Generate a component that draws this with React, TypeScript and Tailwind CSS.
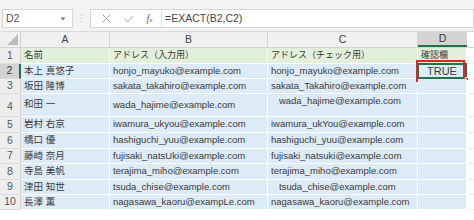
import React from "react";

type Row = {
	n: number;
	h: string;
	a: string;
	b: string;
	c: string;
	d?: string;
};

const rows: Row[] = [
	{ n: 1, h: "h-[16px]", a: "名前", b: "アドレス（入力用）", c: "アドレス（チェック用）", d: "確認欄" },
	{ n: 2, h: "h-[15px]", a: "本上 真悠子", b: "honjo_mayuko@example.com", c: "honjo_mayuko@example.com", d: "TRUE" },
	{ n: 3, h: "h-[15px]", a: "坂田 隆博", b: "sakata_takahiro@example.com", c: "sakata_Takahiro@example.com" },
	{ n: 4, h: "h-[23px]", a: "和田 一", b: "wada_hajime@example.com", c: "   wada_hajime@example.com" },
	{ n: 5, h: "h-[16px]", a: "岩村 右京", b: "iwamura_ukyou@example.com", c: "iwamura_ukYou@example.com" },
	{ n: 6, h: "h-[16px]", a: "橋口 優", b: "hashiguchi_yuu@example.com", c: "hashiguchi_yuu@example.com" },
	{ n: 7, h: "h-[15px]", a: "藤崎 奈月", b: "fujisaki_natsUki@example.com", c: "fujisaki_natsuki@example.com" },
	{ n: 8, h: "h-[16px]", a: "寺島 美帆", b: "terajima_miho@example.com", c: "terajima_miho@example.com" },
	{ n: 9, h: "h-[15px]", a: "津田 知世", b: "tsuda_chise@example.com", c: "   tsuda_chise@example.com" },
	{ n: 10, h: "h-[15px]", a: "長澤 薫", b: "nagasawa_kaoru@exampLe.com", c: "nagasawa_kaoru@example.com" },
];

function FormulaBar() {
	return (
		<div className="h-[32px] bg-[#f3f3f3] flex items-start pt-[9px] pl-[2px] border-b border-[#dadada]">
			<div className="w-[71px] h-[19px] bg-white border border-[#d6d6d6] flex items-center justify-between pl-[3px] pr-[6px]">
				<span className="text-[10.5px] text-[#555]">D2</span>
				<svg width="6" height="4" viewBox="0 0 6 4">
					<path d="M0.5 0.5 L3 3.5 L5.5 0.5 Z" fill="#777" />
				</svg>
			</div>
			<div className="w-[17px] h-[19px] flex flex-col items-center justify-center gap-[2px]">
				<span className="w-[1px] h-[1px] bg-[#bbb]" />
				<span className="w-[1px] h-[1px] bg-[#bbb]" />
				<span className="w-[1px] h-[1px] bg-[#bbb]" />
			</div>
			<div className="flex-1 h-[19px] bg-white border border-[#d6d6d6] flex items-center">
				<div className="w-[71px] h-full flex items-center justify-around pl-[4px] pr-[2px] border-r border-[#e2e2e2]">
					<svg width="9" height="9" viewBox="0 0 9 9">
						<path d="M1 1 L8 8 M8 1 L1 8" stroke="#a8a8a8" strokeWidth="1" />
					</svg>
					<svg width="10" height="8" viewBox="0 0 10 8">
						<path d="M1 4 L3.8 7 L9 1" stroke="#a8a8a8" strokeWidth="1" fill="none" />
					</svg>
					<span className="text-[10px] italic text-[#666] font-['Liberation_Serif',serif]">
						f<span className="text-[7px]">x</span>
					</span>
				</div>
				<span className="pl-[3px] text-[10.5px] text-[#444]">=EXACT(B2,C2)</span>
			</div>
		</div>
	);
}

function ColumnHeaders() {
	return (
		<div className="flex h-[16px] bg-[#f0f0f0] border-b border-[#d4d4d4] text-[10.5px] text-[#444]">
			<div className="w-[21px] relative border-r border-[#d4d4d4]">
				<svg className="absolute right-[2px] bottom-[2px]" width="11" height="11" viewBox="0 0 11 11">
					<path d="M11 0 L11 11 L0 11 Z" fill="#bdbdbd" />
				</svg>
			</div>
			<div className="w-[89px] flex items-center justify-center border-r border-[#d4d4d4]">A</div>
			<div className="w-[158px] flex items-center justify-center border-r border-[#d4d4d4]">B</div>
			<div className="w-[150px] flex items-center justify-center border-r border-[#d4d4d4]">C</div>
			<div className="w-[49px] flex items-center justify-center bg-[#d3d3d3] border-b-2 border-[#217346] text-[#3a3a3a]">
				D
			</div>
			<div className="flex-1 bg-white" />
		</div>
	);
}

function SheetRow({ row }: { row: Row }) {
	const first = row.n === 1;
	const fill = first ? "bg-[#e2efda]" : "bg-[#ddebf7]";
	const tall = row.n === 4;
	const selected = row.n === 2;
	return (
		<div className={`flex ${row.h} text-[9.5px] text-[#3a3a3a]`}>
			<div
				className={`w-[21px] flex justify-center text-[10.5px] border-b border-[#dcdcdc] ${
					tall ? "items-end pb-[1px]" : "items-center"
				} ${selected ? "bg-[#d3d3d3] border-r-2 border-r-[#217346] text-[#3a3a3a]" : "bg-[#eeeeee] border-r border-r-[#d4d4d4] text-[#555]"}`}
			>
				{row.n}
			</div>
			<div
				className={`w-[89px] ${fill} border-r border-b border-white flex pl-[3px] overflow-hidden whitespace-nowrap ${
					tall ? "items-start pt-[3px]" : "items-center"
				}`}
			>
				<span className="text-[9.5px]">{row.a}</span>
			</div>
			<div
				className={`w-[158px] ${fill} border-r border-b border-white flex items-center pl-[3px] overflow-hidden whitespace-pre`}
			>
				<span className={first ? "text-[9px]" : ""}>{row.b}</span>
			</div>
			<div
				className={`w-[150px] ${fill} border-r border-b border-white flex pl-[3px] overflow-hidden whitespace-pre ${
					tall ? "items-start" : "items-center"
				}`}
			>
				<span className={first ? "text-[9px]" : ""}>{row.c}</span>
			</div>
			<div
				className={`w-[49px] ${fill} border-r border-b border-white flex items-center relative ${
					selected ? "justify-center" : "pl-[3px]"
				}`}
			>
				{row.d && <span className={first ? "text-[9px]" : "text-[11px]"}>{row.d}</span>}
				{selected && (
					<>
						<div className="absolute inset-[-1px] border-2 border-[#217346]" />
						<div className="absolute right-[-3px] bottom-[-3px] w-[4px] h-[4px] bg-[#217346] border border-white" />
						<div className="absolute left-[-2px] right-[1px] top-[-4px] bottom-[-4px] border-2 border-[#e8202a]" />
					</>
				)}
			</div>
			<div className="flex-1 bg-white border-b border-[#f0f0f0]" />
		</div>
	);
}

export default function App() {
	return (
		<div className="w-[474px] h-[220px] overflow-hidden bg-white font-['Liberation_Sans','Noto_Sans_CJK_JP',sans-serif]">
			<FormulaBar />
			<ColumnHeaders />
			{rows.map((row) => (
				<SheetRow key={row.n} row={row} />
			))}
		</div>
	);
}
